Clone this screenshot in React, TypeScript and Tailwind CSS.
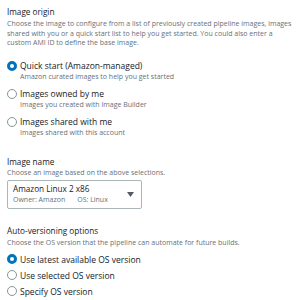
import React from "react";

function Radio({ checked }: { checked?: boolean }) {
  return checked ? (
    <span className="w-[10px] h-[10px] rounded-full border-[3px] border-[#0073bb] bg-white flex-shrink-0" />
  ) : (
    <span className="w-[10px] h-[10px] rounded-full border border-[#879596] bg-white flex-shrink-0" />
  );
}

function Option({ label, desc, checked }: { label: string; desc?: string; checked?: boolean }) {
  return (
    <div className="flex flex-col">
      <div className={`flex items-center gap-[3px] ${desc ? "h-[13px]" : "h-[16px]"}`}>
        <Radio checked={checked} />
        <span className="text-[8.5px] text-[#16191f] leading-[13px]">{label}</span>
      </div>
      {desc && <div className="pl-[13px] text-[7px] text-[#687078] leading-[10px]">{desc}</div>}
    </div>
  );
}

function Heading({ title, desc, className }: { title: string; desc: string; className: string }) {
  return (
    <div className={className}>
      <div className="text-[8.2px] text-[#16191f] leading-[12px]">{title}</div>
      <p className="text-[7px] text-[#687078] leading-[10px]">{desc}</p>
    </div>
  );
}

export default function App() {
  return (
    <div className="w-[296px] h-[300px] bg-white pl-[7px] pr-[4px] pt-[6px] font-['Open_Sans',sans-serif]">
      <div className="text-[8.2px] text-[#16191f] leading-[12px]">Image origin</div>
      <p className="mt-[1px] text-[7px] text-[#687078] leading-[9.7px]">
        Choose the image to configure from a list of previously created pipeline images, images
        shared with you or a quick start list to help you get started. You could also enter a
        custom AMI ID to define the base image.
      </p>
      <div className="mt-[11px] flex flex-col gap-[5px]">
        <Option checked label="Quick start (Amazon-managed)" desc="Amazon curated images to help you get started" />
        <Option label="Images owned by me" desc="Images you created with Image Builder" />
        <Option label="Images shared with me" desc="Images shared with this account" />
      </div>

      <Heading
        className="mt-[17.5px]"
        title="Image name"
        desc="Choose an image based on the above selections."
      />
      <div className="mt-[2px] w-[135px] h-[29px] border border-[#aab7b8] rounded-[2px] flex items-center justify-between pl-[5px] pr-[7px]">
        <div className="flex flex-col">
          <span className="text-[8.2px] text-[#16191f] leading-[11px]">Amazon Linux 2 x86</span>
          <span className="text-[7px] text-[#687078] leading-[11px]">
            Owner: Amazon<span className="ml-[12px]">OS: Linux</span>
          </span>
        </div>
        <svg width="7" height="5" viewBox="0 0 7 5">
          <path d="M0 0h7L3.5 5z" fill="#545b64" />
        </svg>
      </div>

      <div className="mt-[16.5px] text-[8.2px] text-[#16191f] leading-[12px]">Auto-versioning options</div>
      <p className="mt-[1px] text-[7px] text-[#687078] leading-[10px]">
        Choose the OS version that the pipeline can automate for future builds.
      </p>
      <div className="mt-[3px] flex flex-col">
        <Option checked label="Use latest available OS version" />
        <Option label="Use selected OS version" />
        <Option label="Specify OS version" />
      </div>
    </div>
  );
}
